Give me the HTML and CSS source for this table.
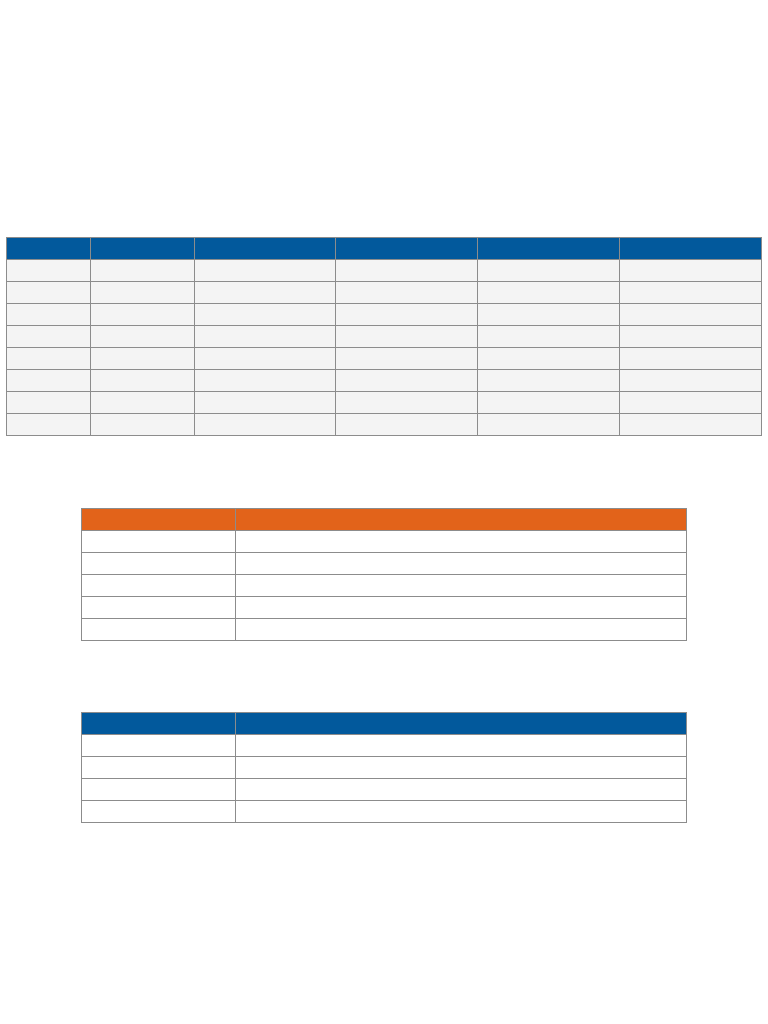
FILE: index.html
```html
<!DOCTYPE html>
<html>
<head>
<meta charset="utf-8">
<link rel="stylesheet" href="styles.css">
</head>
<body>
<main class="page">
  <table class="grid grid-wide">
    <colgroup>
      <col class="w84"><col class="w104"><col class="w141"><col class="w142"><col class="w142"><col class="w142">
    </colgroup>
    <thead><tr class="head blue"><th></th><th></th><th></th><th></th><th></th><th></th></tr></thead>
    <tbody class="shaded">
      <tr><td></td><td></td><td></td><td></td><td></td><td></td></tr>
      <tr><td></td><td></td><td></td><td></td><td></td><td></td></tr>
      <tr><td></td><td></td><td></td><td></td><td></td><td></td></tr>
      <tr><td></td><td></td><td></td><td></td><td></td><td></td></tr>
      <tr><td></td><td></td><td></td><td></td><td></td><td></td></tr>
      <tr><td></td><td></td><td></td><td></td><td></td><td></td></tr>
      <tr><td></td><td></td><td></td><td></td><td></td><td></td></tr>
      <tr><td></td><td></td><td></td><td></td><td></td><td></td></tr>
    </tbody>
  </table>

  <table class="grid grid-narrow second">
    <colgroup><col class="w154"><col></colgroup>
    <thead><tr class="head orange"><th></th><th></th></tr></thead>
    <tbody>
      <tr><td></td><td></td></tr>
      <tr><td></td><td></td></tr>
      <tr><td></td><td></td></tr>
      <tr><td></td><td></td></tr>
      <tr><td></td><td></td></tr>
    </tbody>
  </table>

  <table class="grid grid-narrow third">
    <colgroup><col class="w154"><col></colgroup>
    <thead><tr class="head blue"><th></th><th></th></tr></thead>
    <tbody>
      <tr><td></td><td></td></tr>
      <tr><td></td><td></td></tr>
      <tr><td></td><td></td></tr>
      <tr><td></td><td></td></tr>
    </tbody>
  </table>
</main>
</body>
</html>
```

FILE: styles.css
```css
html, body {
  margin: 0;
  padding: 0;
  background: #ffffff;
  font-family: "Liberation Sans", Arial, sans-serif;
}

.page {
  padding-top: 237px;
  display: flex;
  flex-direction: column;
}

.grid {
  border-collapse: collapse;
  table-layout: fixed;
}

.grid-wide {
  margin-left: 6px;
  width: 756px;
}

.grid-narrow {
  margin-left: 81px;
  width: 606px;
}

.second { margin-top: 72px; }
.third { margin-top: 71px; }

.grid th,
.grid td {
  border: 1px solid #8c8c8c;
  padding: 0;
  height: 22px;
  box-sizing: border-box;
}

.head.blue th { background: #02599c; }
.head.orange th { background: #e2631a; }

.shaded td { background: #f4f4f4; }

.w84 { width: 84px; }
.w104 { width: 104px; }
.w141 { width: 141px; }
.w142 { width: 142px; }
.w154 { width: 154px; }
```
